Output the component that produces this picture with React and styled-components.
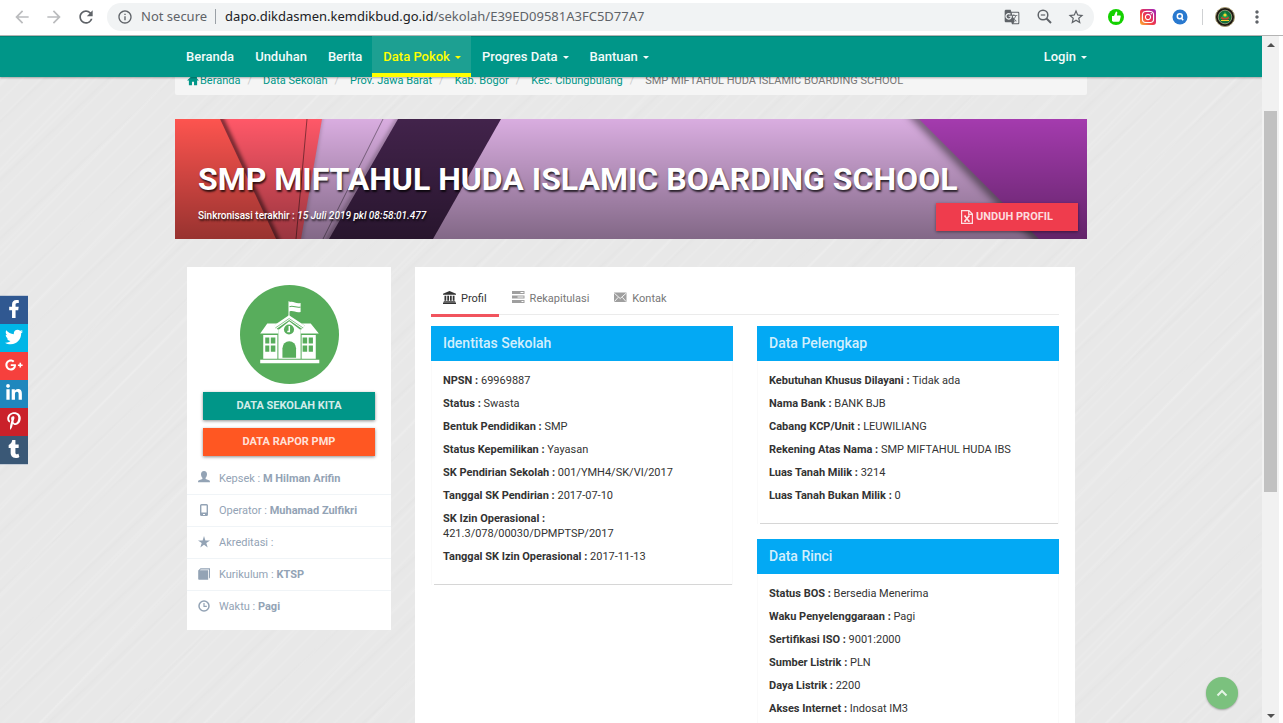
import React, { useState } from 'react';
import styled, { createGlobalStyle, css } from 'styled-components';
import {
    MdArrowBack,
    MdArrowForward,
    MdGTranslate,
    MdInfoOutline,
    MdMoreVert,
    MdRefresh,
    MdStarBorder,
} from 'react-icons/md';
import {
    FaFacebookF,
    FaGooglePlusG,
    FaInstagram,
    FaLinkedinIn,
    FaPinterestP,
    FaTumblr,
    FaTwitter,
} from 'react-icons/fa';

const GlobalStyle = createGlobalStyle`
    * {
        box-sizing: border-box;
    }

    body {
        margin: 0;
        font-family: Roboto, 'Liberation Sans', sans-serif;
        font-size: 11px;
        line-height: 15px;
        color: #333;
        background: #fff;
    }

    a {
        color: inherit;
        text-decoration: none;
    }

    button {
        border: none;
        padding: 0;
        font-family: inherit;
        cursor: pointer;
    }

    ul, dl, dd, h1, h2, p {
        margin: 0;
        padding: 0;
        list-style: none;
    }
`;

const MENUS = [
    { name: 'Beranda' },
    { name: 'Unduhan' },
    { name: 'Berita' },
    { name: 'Data Pokok', sub: true, active: true },
    { name: 'Progres Data', sub: true },
    { name: 'Bantuan', sub: true },
];

const CRUMBS = ['Data Sekolah', 'Prov. Jawa Barat', 'Kab. Bogor', 'Kec. Cibungbulang'];

const SOCIALS = [
    { name: 'Facebook', color: '#305891', icon: <FaFacebookF /> },
    { name: 'Twitter', color: '#00b6e7', icon: <FaTwitter /> },
    { name: 'Google+', color: '#f6403d', icon: <FaGooglePlusG /> },
    { name: 'LinkedIn', color: '#1f87bd', icon: <FaLinkedinIn /> },
    { name: 'Pinterest', color: '#ca212a', icon: <FaPinterestP /> },
    { name: 'Tumblr', color: '#3a5876', icon: <FaTumblr /> },
];

const IDENTITAS = [
    ['NPSN', '69969887'],
    ['Status', 'Swasta'],
    ['Bentuk Pendidikan', 'SMP'],
    ['Status Kepemilikan', 'Yayasan'],
    ['SK Pendirian Sekolah', '001/YMH4/SK/VI/2017'],
    ['Tanggal SK Pendirian', '2017-07-10'],
    ['SK Izin Operasional', '421.3/078/00030/DPMPTSP/2017', true],
    ['Tanggal SK Izin Operasional', '2017-11-13'],
];

const PELENGKAP = [
    ['Kebutuhan Khusus Dilayani', 'Tidak ada'],
    ['Nama Bank', 'BANK BJB'],
    ['Cabang KCP/Unit', 'LEUWILIANG'],
    ['Rekening Atas Nama', 'SMP MIFTAHUL HUDA IBS'],
    ['Luas Tanah Milik', '3214'],
    ['Luas Tanah Bukan Milik', '0'],
];

const RINCI = [
    ['Status BOS', 'Bersedia Menerima'],
    ['Waku Penyelenggaraan', 'Pagi'],
    ['Sertifikasi ISO', '9001:2000'],
    ['Sumber Listrik', 'PLN'],
    ['Daya Listrik', '2200'],
    ['Akses Internet', 'Indosat IM3'],
];

/* window */

const Window = styled.div`
    display: flex;
    flex-direction: column;
    height: 100vh;
    overflow: hidden;
`;

const Toolbar = styled.header`
    display: flex;
    align-items: center;
    flex: none;
    height: 36px;
    padding: 0 10px 2px 12px;
    border-bottom: 1px solid #b4b4b4;
    color: #5f6368;
`;

const ToolButton = styled.button`
    display: flex;
    align-items: center;
    justify-content: center;
    width: ${({ $width }) => $width || 32}px;
    height: 28px;
    background: none;
    color: ${({ $muted }) => ($muted ? '#bbbcbe' : '#5f6368')};
    font-size: ${({ $size }) => $size || 20}px;
`;

const ToolDivider = styled.span`
    width: 1px;
    height: 16px;
    margin: 0 6px;
    background: #cfd1d3;
`;

const Omnibox = styled.div`
    display: flex;
    align-items: center;
    flex: 1;
    height: 28px;
    margin: 0 6px 0 10px;
    padding: 0 2px 0 10px;
    border-radius: 14px;
    background: #f1f3f4;
    font-family: 'Noto Sans', 'Open Sans', sans-serif;
    font-size: 13px;
`;

const Secure = styled.span`
    margin-left: 8px;
    padding-right: 8px;
    border-right: 1px solid #9aa0a6;
`;

const Host = styled.label`
    margin-left: 9px;
    color: #202124;
`;

const PathInput = styled.input`
    flex: 1;
    min-width: 0;
    padding: 0;
    border: none;
    outline: none;
    background: none;
    font: inherit;
    color: #5f6368;
`;

const Body = styled.div`
    display: flex;
    flex: 1;
    min-height: 0;
    padding-right: 4px;
`;

const Scrollbar = styled.div`
    display: flex;
    flex-direction: column;
    align-items: center;
    flex: none;
    width: 17px;
    padding: 7px 0 5px;
    background: #f1f1f1;
`;

const ScrollThumb = styled.div`
    width: 13px;
    height: 381px;
    margin: 64px 0 auto;
    background: #c1c1c1;
`;

/* page */

const Page = styled.div`
    position: relative;
    flex: 1;
    overflow: hidden;
    background:
        repeating-linear-gradient(134deg, transparent 0 32px, rgba(255, 255, 255, 0.14) 34px, transparent 36px 59px),
        repeating-linear-gradient(137deg, transparent 0 17px, rgba(0, 0, 0, 0.01) 19px, transparent 22px 43px),
        repeating-linear-gradient(135deg, transparent 0 5px, rgba(255, 255, 255, 0.1) 7px, transparent 9px 13px),
        #e8e8e8;
`;

const Navbar = styled.nav`
    position: absolute;
    top: 0;
    right: 0;
    left: 0;
    z-index: 2;
    background: #009688;
    box-shadow: inset 0 1px 0 #008477, 0 1px 2px rgba(0, 0, 0, 0.3);
`;

const Container = styled.div`
    max-width: 912px;
    margin: 0 auto;
`;

const NavList = styled.ul`
    display: flex;
    height: 41px;
`;

const NavItem = styled.li`
    margin: ${({ $last }) => ($last ? '0 -10px 0 auto' : '0')};
`;

const NavLink = styled.a`
    display: flex;
    align-items: center;
    height: 100%;
    padding: 4px 10px 0 11px;
    border-bottom: 4px solid transparent;
    font-size: 13px;
    font-weight: 500;
    color: #f2fbfa;

    ${({ $active }) => $active && css`
        border-color: #ff0;
        background: #1da092;
        color: #ff0;
    `}
`;

const Caret = styled.i`
    margin: 2px 0 0 5px;
    border: 3px solid transparent;
    border-top-color: currentColor;
    border-bottom: none;
`;

const Content = styled(Container).attrs({ as: 'main' })`
    padding-top: 28px;
`;

const Breadcrumb = styled.ul`
    display: flex;
    margin-bottom: 24px;
    padding: 9px 12px 7px;
    border-radius: 2px;
    background: #f5f5f5;
    color: #777;
`;

const Crumb = styled.li`
    display: flex;
    color: ${({ $current }) => ($current ? '#777' : '#009688')};

    &:not(:first-child)::before {
        content: '/';
        padding: 0 11px 0 7px;
        color: #ccc;
    }

    svg {
        width: 12px;
        height: 12px;
        margin: 1px 1px 0 0;
    }
`;

const Banner = styled.section`
    position: relative;
    height: 120px;
    padding: 42px 23px 0;
    color: #fff;
    text-shadow: 1px 2px 2px rgba(0, 0, 0, 0.75);
`;

const BannerArt = styled.svg`
    position: absolute;
    inset: 0;
    width: 100%;
    height: 100%;
`;

const BannerTitle = styled.h1`
    position: relative;
    font-size: 32px;
    line-height: 36px;
    font-weight: 700;
`;

const SyncInfo = styled.p`
    position: relative;
    margin-top: 11px;
    font-size: 10px;
    font-weight: 500;
`;

const ActionButton = styled.button`
    display: flex;
    align-items: center;
    justify-content: center;
    gap: 3px;
    width: 100%;
    height: 28px;
    padding-bottom: 1px;
    background: ${({ $color }) => $color};
    box-shadow: 0 1px 3px rgba(0, 0, 0, 0.45);
    color: rgba(255, 255, 255, 0.84);
    font-size: 11px;
    font-weight: 700;
    text-transform: uppercase;
    text-shadow: none;
`;

const DownloadButton = styled(ActionButton)`
    position: absolute;
    right: 9px;
    bottom: 8px;
    width: 142px;
`;

const Columns = styled.div`
    display: grid;
    grid-template-columns: 204px 1fr;
    gap: 24px;
    align-items: start;
    padding: 28px 12px 0;
`;

const Card = styled.section`
    background: #fff;
`;

const SideCard = styled(Card)`
    padding-bottom: 8px;
`;

const SideTop = styled.div`
    display: flex;
    flex-direction: column;
    align-items: center;
    gap: 8px;
    padding: 18px 16px 6px;
`;

const SideRow = styled.li`
    display: flex;
    align-items: center;
    height: 32px;
    padding: 0 11px;
    color: #93a3b5;

    & + & {
        border-top: 1px solid #f0f4f7;
    }

    svg {
        width: 12px;
        height: 12px;
        margin: 0 9px 2px 0;
        flex: none;
    }
`;

const MainCard = styled(Card)`
    min-height: 480px;
    padding: 13px 16px;
`;

const Tabs = styled.div`
    display: flex;
    gap: 1px;
    height: 37px;
    margin-bottom: 9px;
    box-shadow: inset 0 -2px 0 #fff, inset 0 -3px 0 #ebebeb;
`;

const Tab = styled.button`
    display: flex;
    align-items: center;
    gap: 5px;
    padding: 2px 12px 0;
    border-bottom: 3px solid ${({ $active }) => ($active ? '#f1545e' : 'transparent')};
    background: none;
    color: ${({ $active }) => ($active ? '#333' : '#777')};
    font-size: 11px;

    svg {
        width: 13px;
        height: 13px;
        margin-bottom: 2px;
        opacity: ${({ $active }) => ($active ? 1 : 0.7)};
    }
`;

const PanelGrid = styled.div`
    display: grid;
    grid-template-columns: 1fr 1fr;
    gap: 24px;
`;

const PanelBox = styled.section`
    margin-bottom: 15px;
    border: 1px solid #fafafa;
    border-width: 0 1px;

    &::after {
        content: '';
        display: block;
        height: 1px;
        margin: 0 0 0 2px;
        background: #d6d6d6;
    }
`;

const PanelTitle = styled.h2`
    margin: 0 -1px;
    padding: 10px 12px;
    background: #03a9f4;
    color: rgba(255, 255, 255, 0.84);
    font-size: 14px;
    font-weight: 500;
`;

const PanelList = styled.dl`
    padding: 12px 11px;
`;

const PanelRow = styled.div`
    margin-bottom: 8px;

    dt, dd {
        display: inline;
    }

    dt {
        font-weight: 700;
        color: #333;
    }

    dd {
        display: ${({ $wrap }) => ($wrap ? 'block' : 'inline')};
    }
`;

const SocialBar = styled.aside`
    position: absolute;
    top: 259px;
    left: 0;
    z-index: 1;
    border: 1px solid rgba(48, 88, 145, 0.2);
    border-width: 1px 0;
`;

const SocialLink = styled.a`
    display: flex;
    align-items: center;
    justify-content: center;
    width: 28px;
    height: 28px;
    padding-bottom: 2px;
    background: ${({ $color }) => $color};
    color: #fff;
    font-size: 18px;
`;

const TopButton = styled.button`
    position: absolute;
    right: 24px;
    bottom: 14px;
    z-index: 1;
    display: flex;
    align-items: center;
    justify-content: center;
    width: 32px;
    height: 32px;
    border-radius: 50%;
    background: #7bc17e;
    box-shadow: 0 1px 2px rgba(0, 0, 0, 0.3);
`;

/* drawings */

const HomeIcon = () => (
    <svg viewBox="0 0 14 14" fill="currentColor">
        <path d="M7 1 0 7.6h2.2V13h3.6V9h2.4v4h3.6V7.6H14L11.6 5.3V2H9.8v1.6z" />
    </svg>
);

const UserIcon = () => (
    <svg viewBox="0 0 12 12" fill="currentColor">
        <path d="M6 0C4 0 3 1.4 3 3.2c0 1.600.6 2.800 1.400 3.500v1.200L1 9.300C.3 9.600 0 10 0 11.200h12c0-1.200-.3-1.600-1-1.900L7.600 7.900V6.700C8.400 6 9 4.800 9 3.200 9 1.400 8 0 6 0z" />
    </svg>
);

const PhoneIcon = () => (
    <svg viewBox="0 0 12 12" fill="currentColor" fillRule="evenodd">
        <path d="M3.500 0h5A1.500 1.500 0 0 1 10 1.500v9A1.500 1.500 0 0 1 8.500 12h-5A1.500 1.500 0 0 1 2 10.500v-9A1.500 1.500 0 0 1 3.500 0zM3.400 1.600v7h5.200v-7zM5 9.900v1h2v-1z" />
    </svg>
);

const StarIcon = () => (
    <svg viewBox="0 0 12 12" fill="currentColor">
        <path d="M6 0l1.400 4.400H12L8.300 7.100l1.400 4.400L6 8.800l-3.700 2.700 1.400-4.400L0 4.400h4.600z" />
    </svg>
);

const BookIcon = () => (
    <svg viewBox="0 0 12 12" fill="currentColor">
        <path d="M2.500.2H12v9.300l-1 1.200V1.400H2.700l-.8.9h8.300v9.500H1A.9.9 0 0 1 .2 11V2.400z" />
    </svg>
);

const ClockIcon = () => (
    <svg viewBox="0 0 12 12" fill="none" stroke="currentColor" strokeWidth="1.500">
        <circle cx="6" cy="6" r="5" />
        <path d="M6 3v3.300h2.800" strokeWidth="1.200" />
    </svg>
);

const BankIcon = () => (
    <svg viewBox="0 0 14 14" fill="currentColor">
        <path d="M7 0l7 3v1H0V3zM1.600 5h1.900v5.500H1.600zm3 0h1.900v5.500H4.600zm2.900 0h1.900v5.500H7.500zm3 0h1.900v5.500h-1.900zM.8 11h12.400v1H.8zM0 12.500h14v1.500H0z" />
    </svg>
);

const TasksIcon = () => (
    <svg viewBox="0 0 13 13" fill="currentColor" fillRule="evenodd">
        <path d="M0 0h12.500v3H0zm8.500 1v1h3V1zM0 4.500h12.500v3H0zm5.500 1v1h6v-1zM0 9h12.500v3H0zm9.500 1v1h2v-1z" />
    </svg>
);

const EnvelopeIcon = () => (
    <svg viewBox="0 0 13 13">
        <rect y="1.500" width="12.500" height="9.500" fill="currentColor" />
        <path d="M.3 2.200 6.200 7.500l6-5.300M.5 10.500l3.700-4.200M12 10.500 8.300 6.300" fill="none" stroke="#fff" strokeWidth=".9" />
    </svg>
);

const ExcelIcon = () => (
    <svg width="12" height="14" viewBox="0 0 12 14" fill="none" stroke="currentColor">
        <path d="M.6.6h7.400l3.400 3.400v9.400H.6zM7.700.8v3.500h3.500" strokeWidth="1.200" />
        <path d="M3.800 6 8 11.200M8 6l-4.200 5.200" strokeWidth="1.600" />
        <path d="M3 6h2M7 6h2M3 11.200h2M7 11.200h2" />
    </svg>
);

const ZoomOutIcon = () => (
    <svg width="17" height="17" viewBox="0 0 17 17" fill="none" stroke="currentColor">
        <circle cx="7" cy="7" r="4.800" strokeWidth="1.500" />
        <path d="m10.500 10.500 4.500 4.500" strokeWidth="2" />
        <path d="M4.800 7h4.400" strokeWidth="1.200" />
    </svg>
);

const InstagramLogo = () => (
    <svg width="16" height="16" viewBox="0 0 16 16">
        <defs>
            <linearGradient id="insta" x1="0" y1="1" x2="1" y2="0">
                <stop offset="0" stopColor="#fdb32f" />
                <stop offset=".45" stopColor="#f0374c" />
                <stop offset="1" stopColor="#9a22c0" />
            </linearGradient>
        </defs>
        <rect width="16" height="16" rx="3" fill="url(#insta)" />
        <FaInstagram x="1" y="1" size={14} color="#fff" />
    </svg>
);

const ThumbLogo = () => (
    <svg width="16" height="16" viewBox="0 0 16 16">
        <circle cx="8" cy="8" r="8" fill="#14d100" />
        <path d="M4 7h2l2-4.500c1.200 0 1.500.8 1.200 2L8.900 6.500h3c.8 0 1 .7.8 1.300l-1 4c-.2.700-.6 1-1.200 1H5.300L4 12z" fill="#fff" />
    </svg>
);

const SearchLogo = () => (
    <svg width="16" height="16" viewBox="0 0 16 16" fill="none" stroke="#fff">
        <circle cx="8" cy="8" r="7.500" fill="#2979cf" stroke="none" />
        <circle cx="7.800" cy="7.300" r="2.500" strokeWidth="1.500" />
        <path d="M9.500 9.300l1.700 2" strokeWidth="1.500" />
    </svg>
);

const AvatarLogo = () => (
    <svg width="20" height="20" viewBox="0 0 20 20">
        <circle cx="10" cy="10" r="9.500" fill="#1d1812" stroke="#a79b74" />
        <circle cx="10" cy="10" r="6.800" fill="#13703b" stroke="#d8cfa8" strokeWidth=".6" />
        <path d="M10 4.500 15 12H5z" fill="#1fa04e" />
        <circle cx="10" cy="8" r="1.600" fill="#f3d531" />
        <path d="M5.500 9.500 10 11.500l4.500-2-1.500 3H7z" fill="#d7392d" />
        <path d="M6 13.500h8" stroke="#f3d531" />
    </svg>
);

const SchoolLogo = () => (
    <svg width="99" height="99" viewBox="0 0 98 98" fill="#fff">
        <circle cx="49" cy="49" r="49" fill="#58ad5c" />
        <path d="M48 16h1v1c4-1.500 6 2 11 .8v9c-5 1.200-7-2-11-.6V31h-1z" />
        <path d="M49 21.500c4-1.600 7 1.800 11 .2" fill="none" stroke="#58ad5c" />
        <path d="M27 38h10l-3 2 3 4 1-.6V48H20zM70 38H61l3 2-3 4-1-.6V48h18z" />
        <path d="M23 49.500h14V73H23zM61 49.500h14V73H61z" />
        <path d="M38 44.500 48.700 36 60 44.500V73H38z" />
        <path d="M48.500 30 64 40l-2.300 3.600-13-9-12.800 9L33.500 40z" />
        <path d="M20 74h58.500v3.500H20z" />
        <g fill="#58ad5c">
            <circle cx="48.500" cy="44" r="5" />
            <path d="M42 72V62.500a6.700 6.700 0 0 1 13.500 0V72z" />
            <path d="M25 52h4v6h-4zm5.500 0H35v6h-4.500zM25 60h4v6h-4zm5.500 0H35v6h-4.500zM62 52h4.500v6H62zm6 0h4.200v6H68zm-6 8h4.500v6H62zm6 0h4.200v6H68z" />
        </g>
        <path d="M48.800 40.500V46h-2" fill="none" stroke="#fff" strokeWidth="1.500" />
        <path d="m35 42.500 13.600-9.300L62.500 42.500" fill="none" stroke="#58ad5c" strokeWidth=".7" />
    </svg>
);

const ScrollArrow = ({ down }) => (
    <svg width="8" height="4" viewBox="0 0 8 4" fill="#505050">
        <path d={down ? 'M0 0h8L4 4z' : 'M0 4h8L4 0z'} />
    </svg>
);

const BannerBackground = () => (
    <BannerArt viewBox="0 0 912 120" preserveAspectRatio="none">
        <defs>
            <linearGradient id="shade" x1="0" y1="0" x2="0" y2="1">
                <stop offset="0" stopColor="#000" stopOpacity="0" />
                <stop offset="1" stopColor="#000" stopOpacity=".4" />
            </linearGradient>
            <filter id="soft" x="-20%" y="-20%" width="140%" height="140%">
                <feGaussianBlur stdDeviation="2" />
            </filter>
            <filter id="softer" x="-20%" y="-20%" width="140%" height="140%">
                <feGaussianBlur stdDeviation="4" />
            </filter>
        </defs>
        <rect width="912" height="120" fill="#d9ade0" />
        <path d="M147-9 124 129" stroke="#000" strokeOpacity=".3" strokeWidth="3" filter="url(#soft)" />
        <path d="M0 0h147l-21 120H0z" fill="#ff5868" />
        <path d="M132 0 121 120" stroke="#000" strokeOpacity=".45" />
        <path d="M42-9 106 129" stroke="#000" strokeOpacity=".7" strokeWidth="4" filter="url(#soft)" />
        <path d="M0 0h45l56 120H0z" fill="#fd544f" />
        <path d="M208 0 148 120" stroke="#000" strokeOpacity=".4" />
        <path d="M228-9 148 129" stroke="#000" strokeOpacity=".4" strokeWidth="3" filter="url(#soft)" />
        <path d="M223 0h103l-68 120H154z" fill="#42234b" />
        <path d="M735-9 873 129" stroke="#000" strokeOpacity=".6" strokeWidth="8" filter="url(#softer)" />
        <path d="M744 0h168v120h-48z" fill="#a43bae" />
        <rect width="912" height="120" fill="url(#shade)" />
    </BannerArt>
);

const PROFILES = [
    { label: 'Kepsek', value: 'M Hilman Arifin', icon: <UserIcon /> },
    { label: 'Operator', value: 'Muhamad Zulfikri', icon: <PhoneIcon /> },
    { label: 'Akreditasi', value: '', icon: <StarIcon /> },
    { label: 'Kurikulum', value: 'KTSP', icon: <BookIcon /> },
    { label: 'Waktu', value: 'Pagi', icon: <ClockIcon /> },
];

const TABS = [
    { name: 'Profil', icon: <BankIcon /> },
    { name: 'Rekapitulasi', icon: <TasksIcon /> },
    { name: 'Kontak', icon: <EnvelopeIcon /> },
];

const Panel = ({ title, rows }) => (
    <PanelBox>
        <PanelTitle>{title}</PanelTitle>
        <PanelList>
            {rows.map(([label, value, wrap]) => (
                <PanelRow key={label} $wrap={wrap}>
                    <dt>{label} : </dt>
                    <dd>{value}</dd>
                </PanelRow>
            ))}
        </PanelList>
    </PanelBox>
);

const BrowserToolbar = () => {
    const [path, setPath] = useState('/sekolah/E39ED09581A3FC5D77A7');

    return (
        <Toolbar>
            <ToolButton $muted $width={20} aria-label="Back"><MdArrowBack /></ToolButton>
            <ToolButton $muted $width={43} aria-label="Forward"><MdArrowForward /></ToolButton>
            <ToolButton $width={22} aria-label="Reload"><MdRefresh /></ToolButton>
            <Omnibox>
                <MdInfoOutline size={16} />
                <Secure>Not secure</Secure>
                <Host htmlFor="path">dapo.dikdasmen.kemdikbud.go.id</Host>
                <PathInput id="path" value={path} onChange={(e) => setPath(e.target.value)} />
                <ToolButton $size={16} aria-label="Translate"><MdGTranslate /></ToolButton>
                <ToolButton aria-label="Zoom"><ZoomOutIcon /></ToolButton>
                <ToolButton $size={18} aria-label="Bookmark"><MdStarBorder /></ToolButton>
            </Omnibox>
            <ToolButton aria-label="Like"><ThumbLogo /></ToolButton>
            <ToolButton aria-label="Instagram"><InstagramLogo /></ToolButton>
            <ToolButton aria-label="Search"><SearchLogo /></ToolButton>
            <ToolDivider />
            <ToolButton aria-label="Profile"><AvatarLogo /></ToolButton>
            <ToolButton aria-label="Menu"><MdMoreVert /></ToolButton>
        </Toolbar>
    );
};

const App = () => {
    const [tab, setTab] = useState('Profil');

    return (
        <Window>
            <GlobalStyle />
            <BrowserToolbar />

            <Body>
                <Page>
                    <Navbar>
                        <Container>
                            <NavList>
                                {MENUS.map(({ name, sub, active }) => (
                                    <NavItem key={name}>
                                        <NavLink href="#" $active={active}>
                                            {name}
                                            {sub && <Caret />}
                                        </NavLink>
                                    </NavItem>
                                ))}
                                <NavItem $last>
                                    <NavLink href="#">Login<Caret /></NavLink>
                                </NavItem>
                            </NavList>
                        </Container>
                    </Navbar>

                    <Content>
                        <Breadcrumb>
                            <Crumb><HomeIcon /><a href="#">Beranda</a></Crumb>
                            {CRUMBS.map((name) => (
                                <Crumb key={name}><a href="#">{name}</a></Crumb>
                            ))}
                            <Crumb $current>SMP MIFTAHUL HUDA ISLAMIC BOARDING SCHOOL</Crumb>
                        </Breadcrumb>

                        <Banner>
                            <BannerBackground />
                            <BannerTitle>SMP MIFTAHUL HUDA ISLAMIC BOARDING SCHOOL</BannerTitle>
                            <SyncInfo>Sinkronisasi terakhir : <em>15 Juli 2019 pkl 08:58:01.477</em></SyncInfo>
                            <DownloadButton $color="#ef3c4d">
                                <ExcelIcon />
                                Unduh Profil
                            </DownloadButton>
                        </Banner>

                        <Columns>
                            <SideCard>
                                <SideTop>
                                    <SchoolLogo />
                                    <ActionButton $color="#009688">Data Sekolah Kita</ActionButton>
                                    <ActionButton $color="#ff5722">Data Rapor PMP</ActionButton>
                                </SideTop>
                                <ul>
                                    {PROFILES.map(({ label, value, icon }) => (
                                        <SideRow key={label}>
                                            {icon}
                                            <span>{label} : <b>{value}</b></span>
                                        </SideRow>
                                    ))}
                                </ul>
                            </SideCard>

                            <MainCard>
                                <Tabs>
                                    {TABS.map(({ name, icon }) => (
                                        <Tab key={name} $active={tab === name} onClick={() => setTab(name)}>
                                            {icon}
                                            {name}
                                        </Tab>
                                    ))}
                                </Tabs>
                                <PanelGrid>
                                    <div>
                                        <Panel title="Identitas Sekolah" rows={IDENTITAS} />
                                    </div>
                                    <div>
                                        <Panel title="Data Pelengkap" rows={PELENGKAP} />
                                        <Panel title="Data Rinci" rows={RINCI} />
                                    </div>
                                </PanelGrid>
                            </MainCard>
                        </Columns>
                    </Content>

                    <SocialBar>
                        {SOCIALS.map(({ name, color, icon }) => (
                            <SocialLink key={name} href="#" $color={color} aria-label={name}>{icon}</SocialLink>
                        ))}
                    </SocialBar>
                    <TopButton aria-label="Ke atas">
                        <svg width="12" height="8" viewBox="0 0 12 8" fill="none" stroke="#e4f4e5" strokeWidth="2">
                            <path d="M1.500 6.500 6 2l4.500 4.500" />
                        </svg>
                    </TopButton>
                </Page>

                <Scrollbar>
                    <ScrollArrow />
                    <ScrollThumb />
                    <ScrollArrow down />
                </Scrollbar>
            </Body>
        </Window>
    );
};

export default App;
